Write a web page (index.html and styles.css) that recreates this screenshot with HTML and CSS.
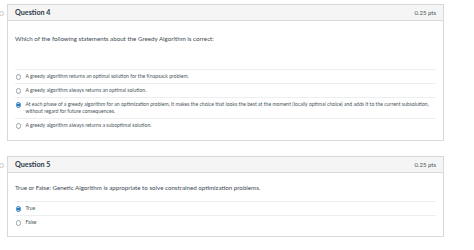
FILE: index.html
```html
<!DOCTYPE html>
<html lang="en">
<head>
    <meta charset="UTF-8">
    <meta name="viewport" content="width=device-width, initial-scale=1.0">
    <title>Quiz</title>
    <link rel="stylesheet" href="styles.css">
</head>
<body>
    <main class="quiz">
        <div class="question q4">
            <span class="marker"></span>
            <div class="q-header">
                <h2>Question 4</h2>
                <span class="pts">0.25 pts</span>
            </div>
            <div class="q-body">
                <p class="q-text">Which of the following statements about the Greedy Algorithm is correct:</p>
                <ul class="answers">
                    <li><span class="radio"></span><span>A greedy algorithm returns an optimal solution for the Knapsack problem.</span></li>
                    <li><span class="radio"></span><span>A greedy algorithm always returns an optimal solution.</span></li>
                    <li><span class="radio checked"></span><span>At each phase of a greedy algorithm for an optimization problem, it makes the choice that looks the best at the moment (locally optimal choice) and adds it to the current subsolution, without regard for future consequences.</span></li>
                    <li><span class="radio"></span><span>A greedy algorithm always returns a suboptimal solution.</span></li>
                </ul>
            </div>
        </div>

        <div class="question q5">
            <span class="marker"></span>
            <div class="q-header">
                <h2>Question 5</h2>
                <span class="pts">0.25 pts</span>
            </div>
            <div class="q-body">
                <p class="q-text">True or False: Genetic Algorithm is appropriate to solve constrained optimization problems.</p>
                <ul class="answers">
                    <li><span class="radio checked"></span><span>True</span></li>
                    <li><span class="radio"></span><span>False</span></li>
                </ul>
            </div>
        </div>
    </main>
</body>
</html>
```

FILE: styles.css
```css
body { margin: 0; font-family: Lato, "Open Sans", sans-serif; color: #2d3b45; background: #fff; }
.quiz { padding: 4px 0 0 7px; width: 437px; }
.question { position: relative; border: 1px solid #d6d9dc; margin-bottom: 15px; }
.marker { position: absolute; left: -9px; top: 6px; width: 3px; height: 3px; border: 1px solid #c2c8cc; border-radius: 50%; }
.q-header { display: flex; justify-content: space-between; align-items: center; height: 15px; padding: 0 7px; background: #f5f5f5; border-bottom: 1px solid #d6d9dc; }
.q-header h2 { margin: 0; font-size: 7.2px; font-weight: 700; color: #2d3b45; }
.pts { font-size: 6px; color: #4a5660; }
.q-body { padding: 0 7px 7px; }
.q-text { margin: 0; font-size: 6.2px; line-height: 8px; color: #3d4a54; }
.q4 .q-text { padding: 14px 0 26px; }
.q5 .q-text { padding: 11px 0 9px; }
.answers { list-style: none; margin: 0; padding: 0; }
.answers li { display: flex; align-items: flex-start; gap: 4px; padding: 3px 0 3px 1px; font-size: 5.1px; line-height: 7px; border-top: 1px solid #eceef0; color: #4a5660; }
.q4 .answers li:last-child { padding-bottom: 4px; }
.radio { flex: none; width: 3.4px; height: 3.4px; margin-top: 1.2px; border: 0.8px solid #98a3ac; border-radius: 50%; background: #fff; }
.radio.checked { border-color: #2b7abc; background: radial-gradient(circle, #2b7abc 55%, #fff 62%); }
```
